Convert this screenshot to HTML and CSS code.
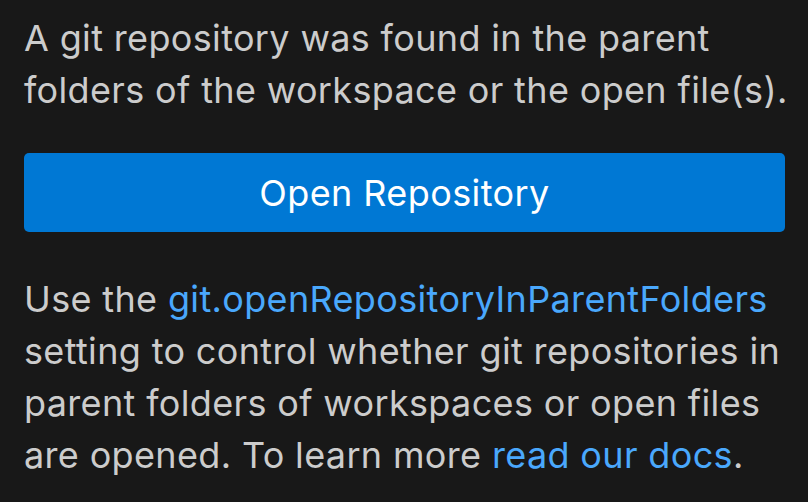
FILE: index.html
```html
<!DOCTYPE html>
<html>
<head>
<meta charset="utf-8">
<link rel="stylesheet" href="styles.css">
</head>
<body>
<div class="view">
  <p class="msg">A git repository was found in the parent folders of the workspace or the open file(s).</p>
  <button class="btn">Open Repository</button>
  <p class="msg second">Use the <a class="link">git.openRepositoryInParentFolders</a> setting to control whether git repositories in parent folders of workspaces or open files are opened. To learn more <a class="link">read our docs</a>.</p>
</div>
</body>
</html>
```
FILE: styles.css
```css
html, body {
  margin: 0;
  padding: 0;
  background: #181818;
  width: 808px;
  height: 502px;
  overflow: hidden;
}
.view {
  padding: 12px 23px 0 24px;
  display: flex;
  flex-direction: column;
  font-family: Inter, "Noto Sans", sans-serif;
  font-size: 36px;
  letter-spacing: 0.35px;
  line-height: 52px;
  color: #cccccc;
}
.msg {
  margin: 0 -14px 0 0;
}
.btn {
  margin-top: 37px;
  height: 79px;
  border: none;
  border-radius: 5px;
  background: #0078d4;
  color: #ffffff;
  font-family: inherit;
  font-size: 36px;
  letter-spacing: 0.4px;
  padding: 0;
}
.second {
  margin-top: 41px;
}
.link {
  color: #4aa8fc;
  text-decoration: none;
}
```
